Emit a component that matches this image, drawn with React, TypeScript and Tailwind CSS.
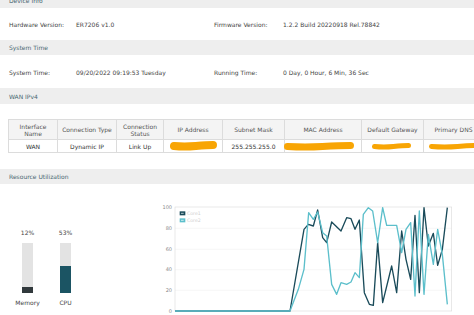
import React from "react";

const core1: [number, number][] = [
  [75, 345], [420, 345], [462, 100], [475, 85], [490, 90], [503, 42], [518, 125], [530, 140], [545, 78], [573, 105], [590, 65], [603, 68], [615, 100], [628, 72], [643, 290], [658, 325], [670, 328], [683, 140], [698, 320], [725, 210], [740, 290], [755, 105], [768, 190], [782, 250], [795, 58], [808, 290], [822, 35], [835, 150], [850, 112], [863, 208], [877, 160], [892, 35],
];
const core2: [number, number][] = [
  [75, 345], [420, 345], [445, 280], [462, 220], [476, 50], [490, 70], [503, 48], [518, 110], [530, 120], [545, 265], [560, 295], [573, 260], [590, 265], [603, 258], [615, 230], [628, 245], [640, 55], [655, 35], [668, 45], [683, 140], [698, 35], [710, 88], [740, 88], [755, 170], [768, 100], [782, 80], [795, 300], [808, 45], [822, 295], [835, 115], [850, 205], [863, 100], [877, 175], [892, 325],
];

const pts = (a: [number, number][]) => a.map((p) => p.join(",")).join(" ");

function Blob({ w, ml = 0, h = 7 }: { w: number; ml?: number; h?: number }) {
  return (
    <svg width={w} height={h + 2} viewBox={`0 0 ${w} ${h + 2}`} style={{ marginLeft: ml }} className="block">
      <path
        d={`M${h / 2} ${h / 2 + 1} Q ${w * 0.3} ${h / 2 + 2} ${w * 0.55} ${h / 2 + 1} T ${w - h / 2} ${h / 2}`}
        stroke="#f8a504"
        strokeWidth={h}
        strokeLinecap="round"
        fill="none"
      />
    </svg>
  );
}

const cols = [49, 59, 47, 59, 62, 77, 62, 60];

export default function App() {
  const th = "border border-[#dcdcdc] bg-[#f4f4f4] font-normal text-[#555] text-center leading-[7px] p-0 h-[20px] whitespace-nowrap";
  const td = "border border-[#dcdcdc] text-[#333] text-center p-0 h-[13px] leading-[7px]";
  return (
    <div className="w-[474px] h-[315px] overflow-hidden bg-white font-['DejaVu_Sans',Verdana,sans-serif] text-[6px] text-[#444]">
      <div className="h-[8px] bg-[#eeeeee] overflow-hidden">
        <div className="h-[14px] -mt-[7px] flex items-center pl-[9px] text-[#4a6872]">Device Info</div>
      </div>
      <div className="h-[32px] flex items-center pt-[1px]">
        <div className="w-[76px] pl-[9px]">Hardware Version:</div>
        <div className="w-[138px]">ER7206 v1.0</div>
        <div className="w-[69px]">Firmware Version:</div>
        <div>1.2.2 Build 20220918 Rel.78842</div>
      </div>
      <div className="h-[15px] bg-[#eeeeee] flex items-center pl-[9px] text-[#4a6872]">System Time</div>
      <div className="h-[33px] flex items-center pt-[2px]">
        <div className="w-[76px] pl-[9px]">System Time:</div>
        <div className="w-[138px]">09/20/2022 09:19:53 Tuesday</div>
        <div className="w-[69px]">Running Time:</div>
        <div>0 Day, 0 Hour, 6 Min, 36 Sec</div>
      </div>
      <div className="h-[16px] bg-[#eeeeee] flex items-center pl-[9px] text-[#4a6872]">WAN IPv4</div>
      <div className="h-[15px]" />
      <div className="pl-[8px] w-[600px]">
        <table className="border-collapse table-fixed w-[475px]">
          <colgroup>
            {cols.map((w, i) => (
              <col key={i} style={{ width: w }} />
            ))}
          </colgroup>
          <thead>
            <tr>
              <th className={th}>Interface<br />Name</th>
              <th className={th}>Connection Type</th>
              <th className={th}>Connection<br />Status</th>
              <th className={th}>IP Address</th>
              <th className={th}>Subnet Mask</th>
              <th className={th}>MAC Address</th>
              <th className={th}>Default Gateway</th>
              <th className={th}>Primary DNS</th>
            </tr>
          </thead>
          <tbody>
            <tr>
              <td className={td}>WAN</td>
              <td className={td}>Dynamic IP</td>
              <td className={td}>Link Up</td>
              <td className={td}>
                <div className="flex justify-center"><Blob w={47} h={8} /></div>
              </td>
              <td className={td}>255.255.255.0</td>
              <td className={td}>
                <div className="flex"><Blob w={70} ml={-1} h={7} /></div>
              </td>
              <td className={td}>
                <div className="flex"><Blob w={39} ml={10} h={5} /></div>
              </td>
              <td className={td}>
                <div className="flex"><Blob w={52} ml={5} h={5} /></div>
              </td>
            </tr>
          </tbody>
        </table>
      </div>
      <div className="h-[16px]" />
      <div className="h-[15px] bg-[#eeeeee] flex items-center pl-[9px] text-[#4a6872]">Resource Utilization</div>
      <div className="flex h-[132px]">
        <div className="w-[150px] flex items-start gap-[27px] pl-[22px] pt-[45px]">
          {[
            { pct: 12, label: "Memory", color: "bg-[#31393c]" },
            { pct: 53, label: "CPU", color: "bg-[#1b5463]" },
          ].map((b) => (
            <div key={b.label} className="w-[11px] flex flex-col items-center">
              <div className="h-[7px] leading-[7px] whitespace-nowrap text-[#444]">{b.pct}%</div>
              <div className="mt-[7px] w-[11px] h-[50px] bg-[#e3e3e3] flex flex-col justify-end">
                <div className={b.color} style={{ height: Math.round((50 * b.pct) / 100) }} />
              </div>
              <div className="mt-[6px] h-[7px] leading-[7px] whitespace-nowrap text-[#444]">{b.label}</div>
            </div>
          ))}
        </div>
        <div className="mt-[12px]">
          <svg width={324} height={120} viewBox="0 0 972 360" className="block">
            {[97, 160, 221, 283].map((y) => (
              <line key={y} x1={75} x2={905} y1={y} y2={y} stroke="#f3f3f3" strokeWidth={2} />
            ))}
            <rect x={75} y={33} width={830} height={312} fill="none" stroke="#dddddd" strokeWidth={2} />
            {[
              ["100", 35],
              ["80", 97],
              ["60", 160],
              ["40", 221],
              ["20", 283],
              ["0", 345],
            ].map(([t, y]) => (
              <text key={t as string} x={66} y={(y as number) + 5} textAnchor="end" fontSize={15} fill="#8a8a8a" fontFamily="DejaVu Sans, sans-serif">
                {t}
              </text>
            ))}
            <polyline points={pts(core1)} fill="none" stroke="#1a4b5a" strokeWidth={4} strokeLinejoin="round" />
            <polyline points={pts(core2)} fill="none" stroke="#5cbfcb" strokeWidth={4} strokeLinejoin="round" />
            <rect x={89} y={46} width={17} height={12} fill="#1a4b5a" />
            <line x1={93} x2={101} y1={52} y2={52} stroke="#fff" strokeWidth={2} />
            <rect x={89} y={67} width={17} height={12} fill="#5cbfcb" />
            <line x1={93} x2={101} y1={73} y2={73} stroke="#fff" strokeWidth={2} />
            <text x={111} y={57} fontSize={14} fill="#cfcfcf" fontFamily="DejaVu Sans, sans-serif">Core1</text>
            <text x={111} y={78} fontSize={14} fill="#cfcfcf" fontFamily="DejaVu Sans, sans-serif">Core2</text>
          </svg>
        </div>
      </div>
    </div>
  );
}
